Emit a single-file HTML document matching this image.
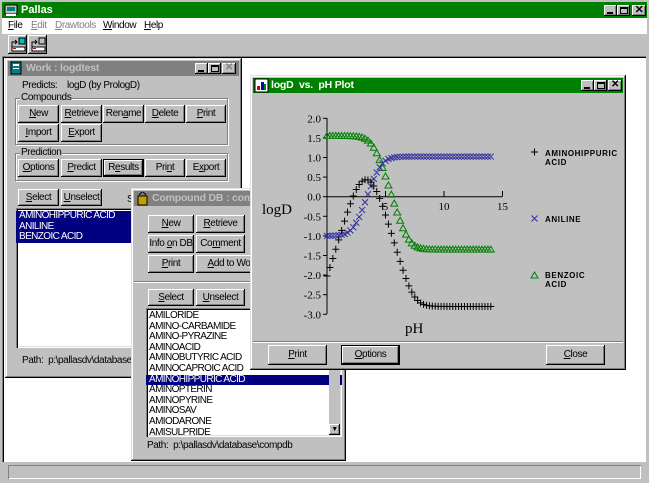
<!DOCTYPE html>
<html><head><meta charset="utf-8"><style>
*{box-sizing:border-box;margin:0;padding:0}
body{width:649px;height:483px;overflow:hidden;background:#c0c0c0;font:10px "Liberation Sans",sans-serif;letter-spacing:-0.4px;color:#000;position:relative}
.a{position:absolute}
.win{position:absolute;background:#c0c0c0;box-shadow:inset -1px -1px #000,inset 1px 1px #dfdfdf,inset -2px -2px #808080,inset 2px 2px #fff}
.tb{position:absolute;left:3px;right:3px;top:3px;height:15px;color:#fff;font-weight:bold;font-size:10.5px;letter-spacing:-0.2px;line-height:15px;padding-left:18px;white-space:nowrap;overflow:hidden}
.btn{position:absolute;background:#c0c0c0;box-shadow:inset -1px -1px #000,inset 1px 1px #fff,inset -2px -2px #808080;text-align:center;white-space:nowrap;overflow:hidden}
.def{box-shadow:inset 0 0 0 1px #000,inset -2px -2px #000,inset 2px 2px #fff,inset -3px -3px #808080}
.cb{position:absolute;width:13px;height:11px;background:#c0c0c0;box-shadow:inset -1px -1px #000,inset 1px 1px #fff,inset -2px -2px #808080}
.grp{position:absolute;border:1px solid #808080;box-shadow:1px 1px #fff,inset 1px 1px #fff}
.grp span{position:absolute;top:-7px;left:4px;background:#c0c0c0;padding:0 1px;line-height:12px}
.list{position:absolute;background:#fff;box-shadow:inset 1px 1px #808080,inset 2px 2px #000,inset -1px -1px #fff,inset -2px -2px #dfdfdf;overflow:hidden}
.row{height:10.6px;line-height:10.6px;padding-left:3px;white-space:nowrap;letter-spacing:-0.6px}
.sel{background:#000080;color:#fff}
.ic{position:absolute;left:1px;top:0;width:15px;height:15px}
</style></head><body>
<div class="a" style="left:2px;top:2px;width:645px;height:16px;background:#008000"></div>
<svg class="a" style="left:4px;top:3px" width="14" height="14"><rect x="1" y="2" width="12" height="9" fill="#c0c0c0" stroke="#000"/><rect x="3" y="4" width="8" height="4" fill="#008080"/><rect x="2" y="11" width="10" height="2" fill="#fff"/></svg>
<div class="a" style="left:21px;top:3px;color:#fff;font-weight:bold;font-size:11px;letter-spacing:0;line-height:15px">Pallas</div>
<div class="cb" style="left:604px;top:5px"><div class="a" style="left:3px;top:7px;width:6px;height:2px;background:#000"></div></div>
<div class="cb" style="left:617px;top:5px"><div class="a" style="left:3px;top:2px;width:8px;height:7px;border:1px solid #000;border-top-width:2px"></div></div>
<div class="cb" style="left:632px;top:5px;width:14px;text-align:center;line-height:10px;font-size:11px;font-weight:bold">✕</div>
<div class="a" style="left:2px;top:18px;width:645px;height:16px;background:#fff"></div>
<div class="a" style="left:8px;top:19px;line-height:14px"><u>F</u>ile</div>
<div class="a" style="left:31px;top:19px;line-height:14px;color:#808080"><u>E</u>dit</div>
<div class="a" style="left:55px;top:19px;line-height:14px;color:#808080"><u>D</u>rawtools</div>
<div class="a" style="left:103px;top:19px;line-height:14px"><u>W</u>indow</div>
<div class="a" style="left:144px;top:19px;line-height:14px"><u>H</u>elp</div>
<div class="btn" style="left:8px;top:35px;width:19px;height:19px"></div>
<div class="btn" style="left:28px;top:35px;width:19px;height:19px"></div>
<svg class="a" style="left:9px;top:36px" width="38" height="17"><path d="M3 11V6h5M6 4l2 2-2 2" stroke="#000" fill="none"/><rect x="10" y="2" width="6" height="6" fill="#00c0c0" stroke="#000"/><rect x="3" y="11" width="13" height="4" fill="#fff" stroke="#000"/><rect x="4" y="12" width="3" height="1" fill="#c00"/><path d="M23 11V6h5M26 4l2 2-2 2" stroke="#000" fill="none"/><rect x="30" y="2" width="6" height="6" fill="#c0c0c0" stroke="#000"/><rect x="23" y="11" width="13" height="4" fill="#fff" stroke="#000"/><rect x="24" y="12" width="3" height="1" fill="#c00"/></svg>
<div class="a" style="left:2px;top:56px;width:644px;height:406px;background:#fff;box-shadow:inset 1px 1px #808080,inset 2px 2px #000"></div>
<div class="a" style="left:8px;top:465px;width:633px;height:14px;box-shadow:inset 1px 1px #808080,inset -1px -1px #fff"></div>

<div class="win" style="left:5px;top:58px;width:237px;height:320px">
 <div class="tb" style="background:#808080;color:#c0c0c0"><svg class="ic" viewBox="0 0 15 15"><rect x="2" y="1" width="10" height="12" fill="#008080" stroke="#000"/><rect x="4" y="3" width="6" height="2" fill="#fff"/><rect x="4" y="7" width="6" height="1" fill="#fff"/></svg>Work : logdtest</div>
 <div class="cb" style="left:190px;top:5px"><div class="a" style="left:3px;top:7px;width:6px;height:2px;background:#000"></div></div>
 <div class="cb" style="left:203px;top:5px"><div class="a" style="left:3px;top:2px;width:8px;height:7px;border:1px solid #000;border-top-width:2px"></div></div>
 <div class="cb" style="left:217px;top:5px;width:14px;text-align:center;line-height:10px;font-weight:bold;color:#808080">✕</div>
 <div class="a" style="left:17px;top:22px">Predicts:</div>
 <div class="a" style="left:62px;top:22px">logD (by PrologD)</div>
 <div class="grp" style="left:10px;top:40px;width:213px;height:47px"><span>Compounds</span></div>
 <div class="btn" style="left:13px;top:47px;width:41px;height:18px;line-height:18px"><u>N</u>ew</div>
 <div class="btn" style="left:56px;top:47px;width:41px;height:18px;line-height:18px"><u>R</u>etrieve</div>
 <div class="btn" style="left:98px;top:47px;width:41px;height:18px;line-height:18px">Ren<u>a</u>me</div>
 <div class="btn" style="left:140px;top:47px;width:40px;height:18px;line-height:18px"><u>D</u>elete</div>
 <div class="btn" style="left:181px;top:47px;width:40px;height:18px;line-height:18px"><u>P</u>rint</div>
 <div class="btn" style="left:13px;top:66px;width:41px;height:18px;line-height:18px"><u>I</u>mport</div>
 <div class="btn" style="left:56px;top:66px;width:41px;height:18px;line-height:18px"><u>E</u>xport</div>
 <div class="grp" style="left:10px;top:95px;width:213px;height:28px"><span>Prediction</span></div>
 <div class="btn" style="left:13px;top:101px;width:41px;height:18px;line-height:18px"><u>O</u>ptions</div>
 <div class="btn" style="left:56px;top:101px;width:41px;height:18px;line-height:18px"><u>P</u>redict</div>
 <div class="btn def" style="left:98px;top:101px;width:41px;height:18px;line-height:18px">R<u>e</u>sults</div>
 <div class="btn" style="left:140px;top:101px;width:40px;height:18px;line-height:18px">Pri<u>n</u>t</div>
 <div class="btn" style="left:181px;top:101px;width:40px;height:18px;line-height:18px">E<u>x</u>port</div>
 <div class="btn" style="left:13px;top:131px;width:41px;height:17px;line-height:17px"><u>S</u>elect</div>
 <div class="btn" style="left:56px;top:131px;width:41px;height:17px;line-height:17px"><u>U</u>nselect</div>
 <div class="a" style="left:122px;top:136px">S</div>
 <div class="list" style="left:11px;top:150px;width:200px;height:140px;padding-top:3px">
  <div class="row sel">AMINOHIPPURIC ACID</div><div class="row sel">ANILINE</div><div class="row sel">BENZOIC ACID</div>
 </div>
 <div class="a" style="left:17px;top:297px;white-space:nowrap">Path:&nbsp; p:\pallasdv\database</div>
</div>

<div class="win" style="left:131px;top:188px;width:215px;height:273px">
 <div class="tb" style="background:#808080;color:#c0c0c0"><svg class="ic" viewBox="0 0 15 15"><rect x="3" y="5" width="9" height="9" fill="#c0a000" stroke="#000"/><path d="M4 4l3-3M11 4L8 1" stroke="#000"/></svg>Compound DB : compdb</div>
 <div class="btn" style="left:17px;top:27px;width:46px;height:18px;line-height:18px"><u>N</u>ew</div>
 <div class="btn" style="left:65px;top:27px;width:49px;height:18px;line-height:18px"><u>R</u>etrieve</div>
 <div class="btn" style="left:17px;top:47px;width:46px;height:18px;line-height:18px">Info <u>o</u>n DB</div>
 <div class="btn" style="left:65px;top:47px;width:49px;height:18px;line-height:18px">Co<u>m</u>ment</div>
 <div class="btn" style="left:17px;top:67px;width:46px;height:18px;line-height:18px"><u>P</u>rint</div>
 <div class="btn" style="left:65px;top:67px;width:70px;height:18px;line-height:18px;text-align:right;padding-right:8px"><u>A</u>dd to Work</div>
 <div class="a" style="left:3px;top:93px;width:209px;height:2px;border-top:1px solid #808080;border-bottom:1px solid #fff"></div>
 <div class="btn" style="left:17px;top:101px;width:46px;height:17px;line-height:17px"><u>S</u>elect</div>
 <div class="btn" style="left:65px;top:101px;width:49px;height:17px;line-height:17px"><u>U</u>nselect</div>
 <div class="list" style="left:15px;top:120px;width:196px;height:129px;padding-top:3px">
  <div class="row">AMILORIDE</div><div class="row">AMINO-CARBAMIDE</div><div class="row">AMINO-PYRAZINE</div><div class="row">AMINOACID</div><div class="row">AMINOBUTYRIC ACID</div><div class="row">AMINOCAPROIC ACID</div><div class="row sel">AMINOHIPPURIC ACID</div><div class="row">AMINOPTERIN</div><div class="row">AMINOPYRINE</div><div class="row">AMINOSAV</div><div class="row">AMIODARONE</div><div class="row">AMISULPRIDE</div>
  <div class="a" style="right:2px;top:2px;width:11px;bottom:2px;background:#c0c0c0"><div class="btn" style="left:0;bottom:0;width:11px;height:11px;font-size:7px;line-height:11px">▼</div></div>
 </div>
 <div class="a" style="left:16px;top:252px;white-space:nowrap">Path:&nbsp; p:\pallasdv\database\compdb</div>
</div>

<div class="win" style="left:250px;top:75px;width:376px;height:295px">
 <div class="tb" style="background:#008000"><svg class="ic" viewBox="0 0 15 15"><rect x="1" y="1" width="13" height="13" fill="#fff" stroke="#000"/><rect x="3" y="8" width="3" height="4" fill="#c00"/><rect x="7" y="4" width="3" height="8" fill="#00c"/><rect x="10" y="6" width="2" height="6" fill="#080"/></svg>logD&nbsp; vs.&nbsp; pH Plot</div>
 <div class="cb" style="left:331px;top:5px"><div class="a" style="left:3px;top:7px;width:6px;height:2px;background:#000"></div></div>
 <div class="cb" style="left:344px;top:5px"><div class="a" style="left:3px;top:2px;width:8px;height:7px;border:1px solid #000;border-top-width:2px"></div></div>
 <div class="cb" style="left:358px;top:5px;width:14px;text-align:center;line-height:10px;font-weight:bold">✕</div>
 <div class="a" style="left:3px;top:266px;width:370px;height:2px;border-top:1px solid #808080;border-bottom:1px solid #fff"></div>
 <div class="btn" style="left:18px;top:270px;width:59px;height:20px;line-height:20px"><u>P</u>rint</div>
 <div class="btn def" style="left:91px;top:270px;width:59px;height:20px;line-height:20px"><u>O</u>ptions</div>
 <div class="btn" style="left:296px;top:270px;width:59px;height:20px;line-height:20px"><u>C</u>lose</div>
</div>
<svg id="plot" class="a" style="left:250px;top:75px;letter-spacing:0" width="376" height="265" font-family="Liberation Serif,serif">
 <g stroke="#000" fill="none"><path d="M77 43V239M77 121.7H252"/></g>
 <g id="ax"></g>
 <text x="12" y="139" font-size="15">logD</text>
 <text x="155" y="258" font-size="15">pH</text>
 <g font-family="Liberation Sans,sans-serif" font-size="8" font-weight="bold" letter-spacing="0.6">
  <text x="295" y="81">AMINOHIPPURIC</text><text x="295" y="90">ACID</text>
  <text x="295" y="147">ANILINE</text>
  <text x="295" y="203">BENZOIC</text><text x="295" y="212">ACID</text>
 </g>
 <path d="M281 77h7M284.5 73.5v7" stroke="#000"/>
 <path d="M281.5 140.5l6 6M287.5 140.5l-6 6" stroke="#3030a0"/>
 <path d="M284.5 197l-3.5 6h7z" stroke="#008000" fill="none"/>
 <g id="d"></g>
</svg>
<script>
(function(){
var X=function(p){return 77+p*11.7},Y=function(v){return 121.7-v*39.2};
var ax='';
var ys=[2,1.5,1,0.5,0,-0.5,-1,-1.5,-2,-2.5,-3];
ys.forEach(function(v){var y=Y(v);ax+='<path d="M73 '+y+'H77" stroke="#000"/><text x="71" y="'+(y+4)+'" font-size="11" text-anchor="end">'+v.toFixed(1)+'</text>';});
[5,10,15].forEach(function(p){var x=X(p);ax+='<path d="M'+x+' 121.7V116" stroke="#000"/><text x="'+x+'" y="135" font-size="11" text-anchor="middle">'+p+'</text>';});
document.getElementById('ax').innerHTML=ax;
var L=Math.log10||function(x){return Math.log(x)/Math.LN10};
var g1='',g2='',g3='';
for(var p=0;p<=14.001;p+=0.25){
 var a=L(Math.pow(10,0.6)/(1+Math.pow(10,2.7-p)+Math.pow(10,p-3.97))+Math.pow(10,-2.8));
 var b=L(Math.pow(10,1.02)/(1+Math.pow(10,4.45-p))+Math.pow(10,-1));
 var c=L(Math.pow(10,1.55)/(1+Math.pow(10,p-4.0))+Math.pow(10,-1.35));
 var x=X(p),ya=Y(a),yb=Y(b),yc=Y(c);
 g1+='M'+(x-3.5)+' '+ya+'h7M'+x+' '+(ya-3.5)+'v7';
 g2+='M'+(x-3)+' '+(yb-3)+'l6 6M'+(x+3)+' '+(yb-3)+'l-6 6';
 g3+='M'+x+' '+(yc-3.5)+'l-3.5 6h7z';
}
document.getElementById('d').innerHTML='<path d="'+g3+'" stroke="#008000" fill="none"/><path d="'+g2+'" stroke="#3030a0"/><path d="'+g1+'" stroke="#000"/>';
})();
</script>
</body></html>
